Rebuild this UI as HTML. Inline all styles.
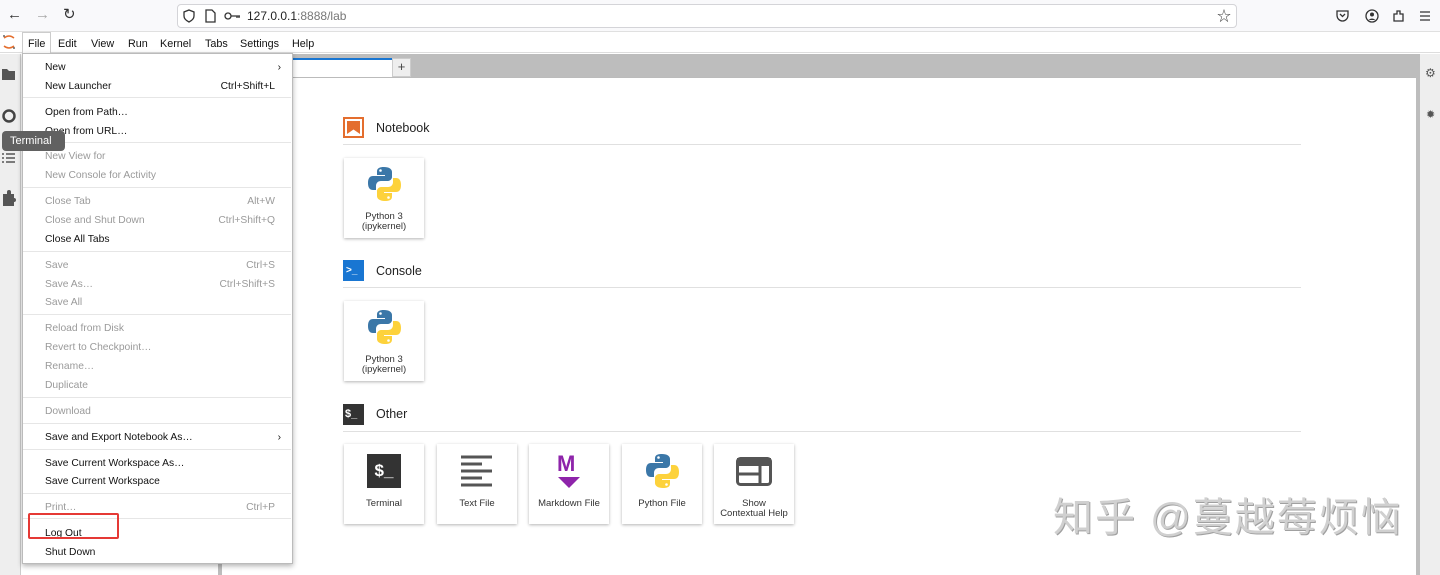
<!DOCTYPE html>
<html><head><meta charset="utf-8"><style>
*{margin:0;padding:0;box-sizing:border-box}
body{width:1440px;height:575px;overflow:hidden;background:#fff;font-family:"Liberation Sans","Noto Sans CJK SC",sans-serif;position:relative;color:#222}
.a{position:absolute}
.mi{position:absolute;left:23px;width:268px;height:18px;line-height:18px;font-size:10.3px;padding-left:22px;color:#111}
.mi.d{color:#9a9a9a}
.mi span{position:absolute;right:16px;top:0}
.sep{position:absolute;left:23px;width:268px;height:1px;background:#e6e6e6}
.card{position:absolute;width:80px;height:80px;background:#fff;box-shadow:0 1px 3px rgba(0,0,0,.3);text-align:center;font-size:9.5px;color:#333;line-height:10px}
.card .lb{position:absolute;left:0;right:0;top:54px}
.hd{position:absolute;left:376px;font-size:12.5px;color:#222}
.hl{position:absolute;left:343px;width:958px;height:1px;background:#e0e0e0}
</style></head><body>
<div class="a" style="left:0;top:0;width:1440px;height:32px;background:#f9f9fb;border-bottom:1px solid #e0e0e0"></div>
<div class="a" style="left:7px;top:6px;font-size:15px;color:#333">←</div>
<div class="a" style="left:35px;top:6px;font-size:15px;color:#aaa">→</div>
<div class="a" style="left:63px;top:5px;font-size:15px;color:#333">↻</div>
<div class="a" style="left:177px;top:4px;width:1060px;height:24px;background:#fff;border:1px solid #d4d4d8;border-radius:4px"></div>
<svg class="a" style="left:183px;top:9px" width="60" height="14"><path d="M6 1 L11 3 V7 C11 10 8 12 6 13 C4 12 1 10 1 7 V3Z" fill="none" stroke="#333" stroke-width="1.3"/><path d="M23 1 H29 L32 4 V13 H23Z" fill="none" stroke="#333" stroke-width="1.3"/><circle cx="45" cy="7" r="3" fill="none" stroke="#333" stroke-width="1.3"/><path d="M48 7 H57 M54 7 V9 M56 7 V9" stroke="#333" stroke-width="1.3"/></svg>
<div class="a" style="left:247px;top:9px;font-size:12px;color:#222">127.0.0.1<span style="color:#777">:8888/lab</span></div>
<div class="a" style="left:1217px;top:6px;font-size:14px;color:#444">☆</div>
<svg class="a" style="left:1336px;top:8px" width="100" height="16"><path d="M1 3 H12 V7 C12 11 9 13 6.5 13 C4 13 1 11 1 7Z" fill="none" stroke="#333" stroke-width="1.3"/><path d="M4 6 L6.5 8.5 L9 6" fill="none" stroke="#333" stroke-width="1.3"/><circle cx="36" cy="8" r="6" fill="none" stroke="#333" stroke-width="1.3"/><circle cx="36" cy="6.5" r="2" fill="#333"/><path d="M32.5 12 Q36 9 39.5 12" fill="#333"/><path d="M58 6 H61 V3 H64 V6 H67 V13 H58Z" fill="none" stroke="#333" stroke-width="1.3"/><path d="M84 4 H94 M84 8 H94 M84 12 H94" stroke="#333" stroke-width="1.3"/></svg>
<div class="a" style="left:0;top:32px;width:1440px;height:21px;background:#fff;border-bottom:1px solid #ddd"></div>
<svg class="a" style="left:2px;top:34px" width="14" height="16"><path d="M2 4 Q7 0 12 4" fill="none" stroke="#e46e2e" stroke-width="1.5"/><path d="M2 12 Q7 16 12 12" fill="none" stroke="#e46e2e" stroke-width="1.5"/><circle cx="2" cy="2" r="1" fill="#666"/><circle cx="12" cy="14" r="1" fill="#666"/></svg>
<div class="a" style="left:22px;top:32px;width:29px;height:22px;background:#fff;border:1px solid #ccc;border-bottom:none"></div>
<div class="a" style="left:28px;top:38px;font-size:10.8px;color:#111">File</div>
<div class="a" style="left:58px;top:38px;font-size:10.8px;color:#111">Edit</div>
<div class="a" style="left:91px;top:38px;font-size:10.8px;color:#111">View</div>
<div class="a" style="left:128px;top:38px;font-size:10.8px;color:#111">Run</div>
<div class="a" style="left:160px;top:38px;font-size:10.8px;color:#111">Kernel</div>
<div class="a" style="left:205px;top:38px;font-size:10.8px;color:#111">Tabs</div>
<div class="a" style="left:240px;top:38px;font-size:10.8px;color:#111">Settings</div>
<div class="a" style="left:292px;top:38px;font-size:10.8px;color:#111">Help</div>
<div class="a" style="left:0;top:54px;width:21px;height:521px;background:#eee;border-right:1px solid #ccc"></div>
<svg class="a" style="left:1px;top:66px" width="16" height="145"><path d="M1 3 H6 L8 5 H14 V14 H1Z" fill="#555"/><circle cx="8" cy="50" r="5.5" fill="none" stroke="#444" stroke-width="2.5"/><path d="M1 88 H3 M5 88 H14 M1 92 H3 M5 92 H14 M1 96 H3 M5 96 H14" stroke="#555" stroke-width="1.4"/><path d="M2 128 H6 V126 A2 2 0 0 1 10 126 V128 H13 V132 A2 2 0 0 1 13 136 V140 H2Z" fill="#555"/></svg>
<div class="a" style="left:218px;top:54px;width:4px;height:521px;background:#bdbdbd"></div>
<div class="a" style="left:222px;top:54px;width:1194px;height:23px;background:#bdbdbd"></div>
<div class="a" style="left:222px;top:58px;width:170px;height:19px;background:#fff;border-top:2px solid #1976d2"></div>
<div class="a" style="left:392px;top:58px;width:19px;height:19px;background:#eee;border:1px solid #ccc;text-align:center;font-size:13px;line-height:16px;color:#444">+</div>
<div class="a" style="left:222px;top:77px;width:1194px;height:498px;background:#fff;border-top:1px solid #bbb"></div>
<div class="a" style="left:1416px;top:54px;width:4px;height:521px;background:#bdbdbd"></div>
<div class="a" style="left:1420px;top:54px;width:20px;height:521px;background:#eee"></div>
<div class="a" style="left:1425px;top:66px;font-size:12px;color:#555">⚙</div>
<div class="a" style="left:1426px;top:108px;font-size:11px;color:#555">✹</div>
<div class="a" style="left:343px;top:117px;width:21px;height:21px;border:2px solid #e46e2e;background:#fff"><div style="position:absolute;left:2px;top:2px;width:13px;height:13px;background:#e46e2e;clip-path:polygon(0 0,100% 0,100% 100%,50% 65%,0 100%)"></div></div>
<div class="hd" style="top:121px">Notebook</div>
<div class="hl" style="top:144px"></div>
<div class="a" style="left:343px;top:260px;width:21px;height:21px;background:#1976d2;color:#fff;font-size:10px;font-weight:bold;line-height:21px;padding-left:3px">&gt;_</div>
<div class="hd" style="top:264px">Console</div>
<div class="hl" style="top:287px"></div>
<div class="a" style="left:343px;top:404px;width:21px;height:21px;background:#333;color:#fff;font-size:11px;font-weight:bold;line-height:21px;padding-left:2px">$_</div>
<div class="hd" style="top:407px">Other</div>
<div class="hl" style="top:431px"></div>
<svg width="0" height="0" style="position:absolute"><defs><g id="py"><path d="M17 1 C10 1 10 4 10 6 V9 H18 V10 H6 C3 10 1 12 1 17 C1 22 3 24 6 24 H9 V20 C9 17 11 15 14 15 H21 C23 15 25 13 25 11 V6 C25 3 22 1 17 1Z" fill="#3b77a8"/><path d="M18 35 C25 35 25 32 25 30 V27 H17 V26 H29 C32 26 34 24 34 19 C34 14 32 12 29 12 H26 V16 C26 19 24 21 21 21 H14 C12 21 10 23 10 25 V30 C10 33 13 35 18 35Z" fill="#fdd23c"/><circle cx="13.5" cy="4.5" r="1.3" fill="#fff"/><circle cx="21.5" cy="31.5" r="1.3" fill="#fff"/></g></defs></svg>
<div class="card" style="left:344px;top:158px"><svg style="margin-top:8px" width="35" height="36"><use href="#py"/></svg><div class="lb" style="top:54px">Python 3<br>(ipykernel)</div></div>
<div class="card" style="left:344px;top:301px"><svg style="margin-top:8px" width="35" height="36"><use href="#py"/></svg><div class="lb" style="top:54px">Python 3<br>(ipykernel)</div></div>
<div class="card" style="left:344px;top:444px"><div style="position:absolute;left:23px;top:10px;width:34px;height:34px;background:#333;color:#fff;font-weight:bold;font-size:17px;line-height:34px">$_</div><div class="lb" style="top:55px">Terminal</div></div>
<div class="card" style="left:437px;top:444px"><svg style="position:absolute;left:23px;top:11px" width="34" height="32"><path d="M1 2 H32 M1 9 H22 M1 16 H32 M1 23 H22 M1 30 H32" stroke="#555" stroke-width="3"/></svg><div class="lb" style="top:55px">Text File</div></div>
<div class="card" style="left:529px;top:444px"><div style="position:absolute;left:28px;top:9px;color:#8e24aa;font-weight:bold;font-size:22px;line-height:22px">M</div><div style="position:absolute;left:29px;top:33px;width:0;height:0;border-left:11px solid transparent;border-right:11px solid transparent;border-top:11px solid #8e24aa"></div><div class="lb" style="top:55px">Markdown File</div></div>
<div class="card" style="left:622px;top:444px"><svg style="margin-top:9px" width="35" height="36"><use href="#py"/></svg><div class="lb" style="top:55px">Python File</div></div>
<div class="card" style="left:714px;top:444px"><svg style="position:absolute;left:22px;top:13px" width="36" height="30"><rect x="1.5" y="1.5" width="33" height="26" rx="3" fill="none" stroke="#555" stroke-width="3"/><rect x="1" y="1" width="34" height="8" fill="#555"/><path d="M3 17 H24 M24 9 V27" stroke="#555" stroke-width="3"/></svg><div class="lb" style="top:55px">Show<br>Contextual Help</div></div>
<div class="a" style="left:1053px;top:494px;font-size:40px;line-height:48px;color:#d0d0d0;text-shadow:1px 1px 0 #a0a0a0;letter-spacing:2px;white-space:nowrap">知乎 @蔓越莓烦恼</div>
<div class="a" style="left:2px;top:131px;width:63px;height:20px;background:#616161;border-radius:4px;color:#fff;font-size:11px;line-height:20px;padding-left:8px;z-index:5">Terminal</div>
<div class="a" style="left:22px;top:53px;width:271px;height:511px;background:#fff;border:1px solid #bbb;box-shadow:0 2px 5px rgba(0,0,0,.3)"></div>
<div class="mi" style="top:59px">New<span style="right:10px">›</span></div>
<div class="mi" style="top:78px">New Launcher<span>Ctrl+Shift+L</span></div>
<div class="sep" style="top:97px"></div>
<div class="mi" style="top:104px">Open from Path…</div>
<div class="mi" style="top:123px">Open from URL…</div>
<div class="sep" style="top:142px"></div>
<div class="mi d" style="top:148px">New View for</div>
<div class="mi d" style="top:167px">New Console for Activity</div>
<div class="sep" style="top:187px"></div>
<div class="mi d" style="top:193px">Close Tab<span>Alt+W</span></div>
<div class="mi d" style="top:212px">Close and Shut Down<span>Ctrl+Shift+Q</span></div>
<div class="mi" style="top:231px">Close All Tabs</div>
<div class="sep" style="top:251px"></div>
<div class="mi d" style="top:257px">Save<span>Ctrl+S</span></div>
<div class="mi d" style="top:276px">Save As…<span>Ctrl+Shift+S</span></div>
<div class="mi d" style="top:294px">Save All</div>
<div class="sep" style="top:314px"></div>
<div class="mi d" style="top:320px">Reload from Disk</div>
<div class="mi d" style="top:339px">Revert to Checkpoint…</div>
<div class="mi d" style="top:358px">Rename…</div>
<div class="mi d" style="top:377px">Duplicate</div>
<div class="sep" style="top:397px"></div>
<div class="mi d" style="top:403px">Download</div>
<div class="sep" style="top:423px"></div>
<div class="mi" style="top:429px">Save and Export Notebook As…<span style="right:10px">›</span></div>
<div class="sep" style="top:449px"></div>
<div class="mi" style="top:455px">Save Current Workspace As…</div>
<div class="mi" style="top:473px">Save Current Workspace</div>
<div class="sep" style="top:493px"></div>
<div class="mi d" style="top:499px">Print…<span>Ctrl+P</span></div>
<div class="sep" style="top:518px"></div>
<div class="mi" style="top:525px">Log Out</div>
<div class="mi" style="top:544px">Shut Down</div>
<div class="a" style="left:28px;top:513px;width:91px;height:26px;border:2px solid #e53935;border-radius:2px"></div>
</body></html>
